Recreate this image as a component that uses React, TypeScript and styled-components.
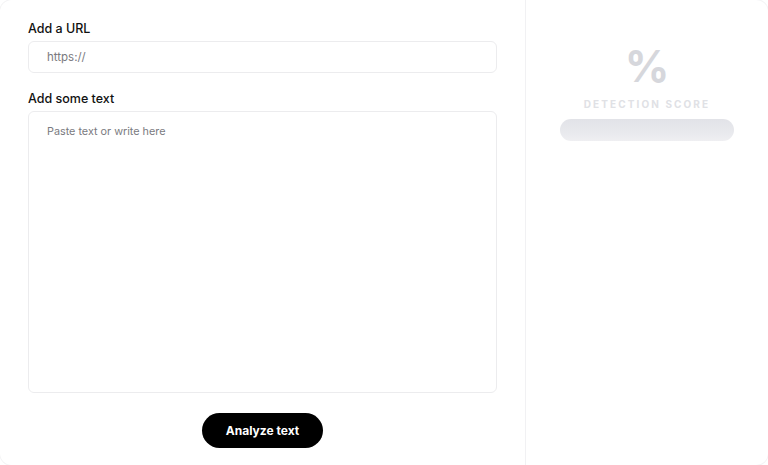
import React from "react";
import styled, { createGlobalStyle } from "styled-components";

const GlobalStyle = createGlobalStyle`
  html, body {
    margin: 0;
    padding: 0;
    background: #ffffff;
  }
  * {
    box-sizing: border-box;
  }
  body {
    font-family: "Inter", "Noto Sans", sans-serif;
  }
`;

const Card = styled.div`
  width: 768px;
  height: 465px;
  display: grid;
  grid-template-columns: 525px 1fr;
  background: #ffffff;
  border-radius: 12px;
  overflow: hidden;
  box-shadow: 0 0 0 1px #f4f4f5;
`;

const Form = styled.div`
  display: flex;
  flex-direction: column;
  padding: 19px 28px 0 28px;
`;

const Label = styled.label<{ $top?: number }>`
  display: block;
  font-size: 12.5px;
  font-weight: 500;
  line-height: 20px;
  color: #111111;
  margin-top: ${(p) => p.$top ?? 0}px;
  margin-bottom: 2px;
`;

const UrlInput = styled.input`
  height: 32px;
  width: 100%;
  border: 1px solid #ececee;
  border-radius: 6px;
  padding: 0 18px;
  font-family: inherit;
  font-size: 11.5px;
  color: #333;
  outline: none;
  &::placeholder {
    color: #7a7a80;
  }
`;

const TextArea = styled.textarea`
  height: 282px;
  width: 100%;
  resize: none;
  border: 1px solid #ececee;
  border-radius: 6px;
  padding: 12px 18px;
  font-family: inherit;
  font-size: 10.8px;
  line-height: 16px;
  color: #333;
  outline: none;
  &::placeholder {
    color: #7a7a80;
  }
`;

const ButtonRow = styled.div`
  display: flex;
  justify-content: center;
  padding-top: 20px;
`;

const AnalyzeButton = styled.button`
  width: 121px;
  height: 35px;
  border: none;
  border-radius: 18px;
  background: #000000;
  color: #ffffff;
  font-family: inherit;
  font-size: 12px;
  font-weight: 700;
  cursor: pointer;
`;

const ScorePanel = styled.aside`
  border-left: 1px solid #f1f1f3;
  display: flex;
  flex-direction: column;
  align-items: center;
  padding-top: 44px;
`;

const Percent = styled.div`
  font-size: 44px;
  font-weight: 700;
  line-height: 44px;
  color: #d6d7dc;
`;

const ScoreLabel = styled.div`
  margin-top: 9px;
  font-size: 10px;
  font-weight: 700;
  letter-spacing: 2.1px;
  line-height: 14px;
  color: #e0e1e5;
  text-transform: uppercase;
`;

const ScoreBar = styled.div`
  margin-top: 8px;
  width: 174px;
  height: 22px;
  border-radius: 11px;
  background: linear-gradient(180deg, #e2e3e8 0%, #e8e9ed 60%, #efeff2 100%);
`;

export default function App() {
  return (
    <>
      <GlobalStyle />
      <Card>
        <Form>
          <Label>Add a URL</Label>
          <UrlInput placeholder="https://" />
          <Label $top={16}>Add some text</Label>
          <TextArea placeholder="Paste text or write here" />
          <ButtonRow>
            <AnalyzeButton>Analyze text</AnalyzeButton>
          </ButtonRow>
        </Form>
        <ScorePanel>
          <Percent>%</Percent>
          <ScoreLabel>Detection score</ScoreLabel>
          <ScoreBar />
        </ScorePanel>
      </Card>
    </>
  );
}
